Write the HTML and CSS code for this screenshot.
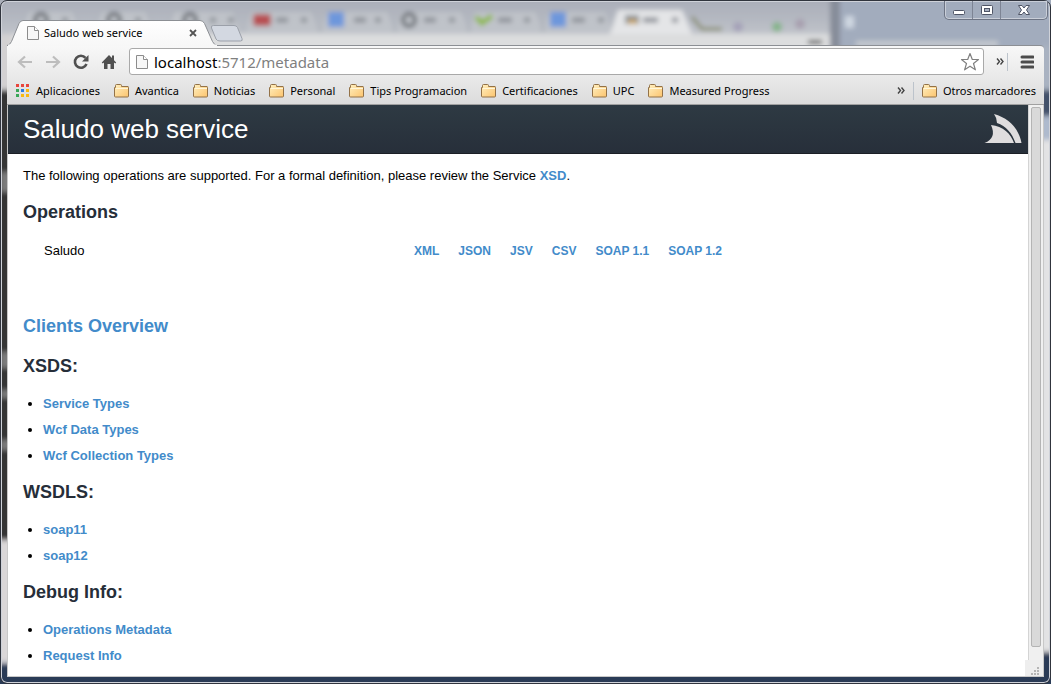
FILE: index.html
```html
<!DOCTYPE html>
<html lang="es">
<head>
  <meta charset="UTF-8">
  <meta name="viewport" content="width=device-width, initial-scale=1.0">
  <title>Saludo web service</title>
  <link rel="stylesheet" href="styles.css">
</head>
<body>
  <!-- shared icons -->
  <svg class="defs" width="0" height="0" aria-hidden="true">
    <defs>
      <linearGradient id="folderFill" x1="0" y1="0" x2="1" y2="1">
        <stop offset="0" stop-color="#fff0c0"/>
        <stop offset="1" stop-color="#fcc46e"/>
      </linearGradient>
      <symbol id="folder" viewBox="0 0 16 14">
        <path d="M.5 12V3.500h1V1.500Q1.500.5 2.500.5h4Q7.500.5 7.500 1.500v1h6.500Q14.500 2.500 14.500 3.500v8.500Q14.500 13 13.500 13h-12Q.5 13 .5 12z" fill="url(#folderFill)" stroke="#937248"/>
        <path d="M2 4.500h12" stroke="#fff6da"/>
      </symbol>
      <symbol id="file" viewBox="0 0 12 14">
        <path d="M.5.5h7l4 4v9H.5z" fill="#f7f7f7" stroke="#8c8c8c"/>
        <path d="M7.500.5v4h4" fill="#fff" stroke="#8c8c8c"/>
      </symbol>
    </defs>
  </svg>

  <!-- blurred windows seen through the glass frame -->
  <svg class="glass" width="1051" height="684" viewBox="0 0 1051 684" aria-hidden="true">
    <defs>
      <filter id="blur" x="-5%" y="-5%" width="110%" height="110%"><feGaussianBlur stdDeviation="2.500"/></filter>
      <linearGradient id="strip" x1="0" y1="0" x2="0" y2="1">
        <stop offset="0" stop-color="#a5a9b5"/>
        <stop offset=".45" stop-color="#b4b8c1"/>
        <stop offset="1" stop-color="#d0d2d6"/>
      </linearGradient>
    </defs>
    <g filter="url(#blur)">
      <rect x="-10" y="-10" width="850" height="64" fill="url(#strip)"/>
      <path d="M20 32L28 11h45l8 20M93 32l8-21h45l8 20M166 32l8-21h60l8 21M244 32l6-21h62l8 21M320 32l6-21h62l8 21M394 32l6-21h62l8 21M468 32l6-21h62l8 21M542 32l6-21h58l8 21" fill="#bfc3c9" stroke="#a3a8b2"/>
      <path d="M-10 34H850v20H-10z" fill="#dcddde"/>
      <path d="M610 34l8-24h64l10 24z" fill="#e4e5e7"/>
      <rect x="253" y="14" width="18" height="12" rx="3" fill="#b85052"/>
      <rect x="328" y="12" width="16" height="15" fill="#6d97dc"/>
      <rect x="550" y="12" width="16" height="15" fill="#6d97dc"/>
      <g fill="none" stroke="#6a6e75" stroke-width="4">
        <circle cx="41" cy="20" r="6"/><circle cx="114" cy="20" r="6"/><circle cx="190" cy="20" r="6"/><circle cx="409" cy="20" r="6"/>
      </g>
      <path d="M476 17l6 6 10-7" fill="none" stroke="#8bb83d" stroke-width="5"/>
      <path d="M625 15h14v9h-14z" fill="#87919a"/>
      <path d="M628 19h9v5h-9z" fill="#c9a562"/>
      <path d="M276 20h12M354 20h12M424 20h12M498 20h14M572 20h13M643 20h15M62 20h6M135 20h6M210 20h6M228 20h6M301 20h6M375 20h6M449 20h6M524 20h6M598 20h6M672 20h6" stroke="#8e9299" stroke-width="5"/>
      <circle cx="777" cy="27" r="5" fill="#84b489"/>
      <circle cx="800" cy="24" r="5" fill="#a79faf"/>
      <circle cx="738" cy="27" r="5" fill="#a4a0b8"/>
      <path d="M692 17l10 12h20" stroke="#848865" fill="none" stroke-width="3"/>
      <path d="M808 42h14" stroke="#555" stroke-width="4"/>
      <rect x="830" y="-10" width="10" height="64" fill="#868c99"/>
      <rect x="840" y="-10" width="221" height="64" fill="#a2acbd"/>
      <rect x="845" y="16" width="9" height="12" fill="#cfd7e1"/>
      <rect x="856" y="41" width="142" height="5" fill="#c8ccd0"/>
      <!-- left edge -->
      <rect x="-10" y="34" width="22" height="56" fill="#d3d1d2"/>
      <rect x="-10" y="90" width="22" height="450" fill="#343434"/>
      <path d="M0 172h12v20H0zM0 352h12v16H0zM0 390h12v8H0zM0 440h12v10H0z" fill="#7b7b7b"/>
      <rect x="-10" y="540" width="22" height="122" fill="#dad7d8"/>
      <!-- right edge -->
      <rect x="1040" y="46" width="22" height="44" fill="#a9b2c1"/>
      <rect x="1040" y="90" width="22" height="26" fill="#43516b"/>
      <rect x="1040" y="116" width="22" height="24" fill="#aebacd"/>
      <rect x="1040" y="140" width="22" height="512" fill="#e3e3e4"/>
      <rect x="-10" y="664" width="1071" height="30" fill="#2c3b56"/>
      <rect x="1040" y="652" width="22" height="40" fill="#2c3b56"/>
    </g>
  </svg>

  <div class="window">
    <header class="titlebar">
      <div class="tab">
        <svg class="tab-shape" width="234" height="26" viewBox="0 0 234 26" aria-hidden="true">
          <defs>
            <linearGradient id="tabFill" x1="0" y1="0" x2="0" y2="1">
              <stop offset="0" stop-color="#fff"/>
              <stop offset="1" stop-color="#f7f7f7"/>
            </linearGradient>
          </defs>
          <path d="M0 25.500q3-.5 4.500-4L12 3.500Q13.500.5 16 .5h177q3 0 4.500 3l8 18q2 4 5 4z" fill="url(#tabFill)" stroke="#8c8f94"/>
          <path d="M1 25.500h209" stroke="#f7f7f7" stroke-width="2"/>
        </svg>
        <svg class="tab-icon" width="12" height="14"><use href="#file"/></svg>
        <span class="tab-title">Saludo web service</span>
        <button class="tab-close" aria-label="Cerrar pestaña">
          <svg width="8" height="8" viewBox="0 0 8 8"><path d="M1 1l6 6M7 1L1 7" stroke="#555" stroke-width="1.800"/></svg>
        </button>
      </div>
      <button class="new-tab" aria-label="Nueva pestaña">
        <svg width="34" height="17" viewBox="0 0 34 17"><path d="M4.500.5H25q2.500 0 3.500 2l4.500 11q1 2.500-1.500 2.500H11q-3 0-4-2L2.500 3Q1.500.5 4.500.5z" fill="#d3d8e1" stroke="#9ba0a9"/></svg>
      </button>
      <div class="controls">
        <button aria-label="Minimizar"><svg width="14" height="14" viewBox="0 0 14 14"><rect x="1.500" y="7.500" width="11" height="4" rx="1" fill="#fff" stroke="#4f5566"/></svg></button>
        <button aria-label="Maximizar"><svg width="14" height="14" viewBox="0 0 14 14"><rect x="1.500" y="2.500" width="11" height="9" rx="1" fill="#fff" stroke="#4f5566"/><rect x="4.500" y="5.500" width="5" height="3" fill="#a9b1c1" stroke="#4f5566"/></svg></button>
        <button class="close" aria-label="Cerrar"><svg width="14" height="14" viewBox="0 0 14 14"><path d="M1.500 2.500h3.500l2 2.500 2-2.500h3.500L9.500 7l3 4.500H9L7 9l-2 2.500H1.500L4.500 7z" fill="#fff" stroke="#4f5566"/></svg></button>
      </div>
    </header>

    <div class="toolbar">
      <button aria-label="Atrás"><svg width="16" height="14" viewBox="0 0 16 14"><path d="M15 7H3M8 1.500L2 7l6 5.500" fill="none" stroke="#bdbdbd" stroke-width="2.200"/></svg></button>
      <button aria-label="Adelante"><svg width="16" height="14" viewBox="0 0 16 14"><path d="M1 7h12M8 1.500L14 7l-6 5.500" fill="none" stroke="#bdbdbd" stroke-width="2.200"/></svg></button>
      <button aria-label="Recargar"><svg width="16" height="16" viewBox="0 0 16 16"><path d="M12.500 3.800A6 6 0 1 0 13.500 10" fill="none" stroke="#505050" stroke-width="2.600"/><path d="M15.500 1v6.500H9z" fill="#505050"/></svg></button>
      <button aria-label="Inicio"><svg width="16" height="16" viewBox="0 0 16 16"><path d="M8 1L.8 8.500l1 1L3 8.500V15h3.500v-5h3v5H13V8.500l1.200 1 1-1L13 6.200V1.500h-2V4z" fill="#505050"/></svg></button>
      <div class="omnibox">
        <svg width="12" height="14"><use href="#file"/></svg>
        <span class="address"><b>localhost</b>:5712/metadata</span>
        <button aria-label="Añadir a marcadores"><svg width="20" height="20" viewBox="0 0 20 20"><path d="M10 1.500l2.300 6h6.200l-5 4 1.900 6.300L10 14.200l-5.400 3.600 1.900-6.300-5-4h6.200z" fill="#fff" stroke="#808080" stroke-width="1.200" stroke-linejoin="round"/></svg></button>
      </div>
      <div class="actions">
        <button aria-label="Más extensiones"><svg width="8" height="7" viewBox="0 0 8 7"><path d="M1 .5l2.500 3L1 6.500M4.500.5l2.500 3-2.500 3" fill="none" stroke="#444" stroke-width="1.400"/></svg></button>
        <span class="divider"></span>
      </div>
      <button aria-label="Menú"><svg width="14" height="14" viewBox="0 0 14 14"><path d="M2 2h11M2 7h11M2 12h11" stroke="#4c4c4c" stroke-width="3" stroke-linecap="round"/></svg></button>
    </div>

    <nav class="bookmarks">
      <a href="#"><svg width="16" height="14" viewBox="0 0 16 14"><path d="M1 0h3v3H1zM6 0h3v3H6zM11 0h3v3h-3z" fill="#e8453c"/><path d="M1 5h3v3H1zM1 10h3v3H1z" fill="#3aa757"/><path d="M6 5h3v3H6z" fill="#2a7de1"/><path d="M11 5h3v3h-3zM6 10h3v3H6zM11 10h3v3h-3z" fill="#f9b90f"/></svg>Aplicaciones</a>
      <a href="#"><svg width="16" height="14"><use href="#folder"/></svg>Avantica</a>
      <a href="#"><svg width="16" height="14"><use href="#folder"/></svg>Noticias</a>
      <a href="#"><svg width="16" height="14"><use href="#folder"/></svg>Personal</a>
      <a href="#"><svg width="16" height="14"><use href="#folder"/></svg>Tips Programacion</a>
      <a href="#"><svg width="16" height="14"><use href="#folder"/></svg>Certificaciones</a>
      <a href="#"><svg width="16" height="14"><use href="#folder"/></svg>UPC</a>
      <a href="#"><svg width="16" height="14"><use href="#folder"/></svg>Measured Progress</a>
      <div class="others">
        <button aria-label="Más marcadores"><svg width="8" height="7" viewBox="0 0 8 7"><path d="M1 .5l2.500 3L1 6.500M4.500.5l2.500 3-2.500 3" fill="none" stroke="#444" stroke-width="1.400"/></svg></button>
        <span class="divider"></span>
        <a href="#"><svg width="16" height="14"><use href="#folder"/></svg>Otros marcadores</a>
      </div>
    </nav>

    <div class="viewport">
      <main class="page">
        <div class="banner">
          <h1>Saludo web service</h1>
          <svg width="38" height="30" viewBox="0 0 38 30" aria-hidden="true">
            <path d="M10 0C25 4 35 15 37.500 29h-6C28 19 22 12 13 9Q13 4 10 0z" fill="#dfddde"/>
            <path d="M7 11c12 1 20 9 23 18H.5Q13 24 7 11z" fill="#dfddde"/>
          </svg>
        </div>
        <div class="content">
          <p>The following operations are supported. For a formal definition, please review the Service <a href="#">XSD</a>.</p>
          <h2>Operations</h2>
          <table>
            <tr>
              <th>Saludo</th>
              <td><a href="#">XML</a></td>
              <td><a href="#">JSON</a></td>
              <td><a href="#">JSV</a></td>
              <td><a href="#">CSV</a></td>
              <td><a href="#">SOAP 1.1</a></td>
              <td><a href="#">SOAP 1.2</a></td>
            </tr>
          </table>
          <h2><a href="#">Clients Overview</a></h2>
          <h2>XSDS:</h2>
          <ul>
            <li><a href="#">Service Types</a></li>
            <li><a href="#">Wcf Data Types</a></li>
            <li><a href="#">Wcf Collection Types</a></li>
          </ul>
          <h2>WSDLS:</h2>
          <ul>
            <li><a href="#">soap11</a></li>
            <li><a href="#">soap12</a></li>
          </ul>
          <h2>Debug Info:</h2>
          <ul>
            <li><a href="#">Operations Metadata</a></li>
            <li><a href="#">Request Info</a></li>
          </ul>
        </div>
      </main>
      <div class="scrollbar">
        <div class="thumb"></div>
        <svg class="grip" width="18" height="16" viewBox="0 0 18 16" aria-hidden="true"><path d="M12 7h2v2h-2zM9 10h2v2H9zM12 10h2v2h-2zM6 13h2v2H6zM9 13h2v2H9zM12 13h2v2h-2z" fill="#b5b5b5"/></svg>
      </div>
    </div>
  </div>
</body>
</html>
```

FILE: styles.css
```css
* {
  box-sizing: border-box;
}

body {
  margin: 0;
  height: 100vh;
  overflow: hidden;
  background: #a9b1bf;
  font-family: "Noto Sans", sans-serif;
  font-size: 11px;
  color: #000;
}

button {
  display: flex;
  padding: 0;
  border: none;
  background: none;
}

svg {
  display: block;
  flex: none;
}

.defs,
.glass {
  position: absolute;
  top: 0;
  left: 0;
}

.window {
  position: relative;
  display: flex;
  flex-direction: column;
  height: 100vh;
  padding: 0 6px 6px;
  border: 1px solid #30343d;
  border-radius: 7px;
  box-shadow: inset 0 0 0 1px #cfd2d9;
}

/* title bar */

.titlebar {
  display: flex;
  align-items: flex-end;
  height: 44px;
  margin-right: -4px;
}

.tab {
  position: relative;
  display: flex;
  align-items: center;
  width: 202px;
  height: 25px;
  padding: 0 12px 0 20px;
}

.tab-shape {
  position: absolute;
  left: 0;
  top: 0;
}

.tab-icon,
.tab-title,
.tab-close {
  position: relative;
}

.tab-title {
  flex: 1;
  margin-left: 5px;
  white-space: nowrap;
}

.new-tab {
  margin-bottom: 3px;
}

.controls {
  display: flex;
  align-self: flex-start;
  margin-left: auto;
  border: 1px solid #6d7484;
  border-top: none;
  border-radius: 0 0 5px 5px;
  box-shadow: inset 0 0 0 1px #c9ced8;
}

.controls button {
  align-items: center;
  justify-content: center;
  width: 28px;
  height: 18px;
  border-right: 1px solid #7d8494;
}

.controls .close {
  width: 46px;
  border-right: none;
}

/* toolbar */

.toolbar {
  display: flex;
  align-items: center;
  gap: 12px;
  height: 32px;
  padding: 0 10px;
  background: linear-gradient(#f8f8f8, #e9e9e9);
  border-top: 1px solid #8c8f94;
  border-radius: 0 4px 0 0;
}

.omnibox {
  display: flex;
  flex: 1;
  align-items: center;
  gap: 6px;
  height: 27px;
  padding: 0 3px 0 6px;
  background: #fff;
  border: 1px solid #a9a9a9;
  border-radius: 3px;
}

.address {
  flex: 1;
  font-size: 15px;
  color: #808080;
}

.address b {
  font-weight: normal;
  color: #000;
}

.actions {
  display: flex;
  align-items: center;
  gap: 3px;
}

.divider {
  width: 1px;
  height: 18px;
  background: #bcc3cb;
}

/* bookmarks */

.bookmarks {
  display: flex;
  align-items: center;
  gap: 14px;
  height: 28px;
  padding: 0 8px;
  background: linear-gradient(#e9e9e9, #dcdcdc);
  border-bottom: 1px solid #a0a0a0;
}

.bookmarks a {
  display: flex;
  align-items: center;
  gap: 5px;
  color: #000;
  text-decoration: none;
  white-space: nowrap;
}

.others {
  display: flex;
  align-items: center;
  gap: 8px;
  margin-left: auto;
}

/* page */

.viewport {
  display: flex;
  flex: 1;
  min-height: 0;
  background: #fff;
  border: 1px solid #c8c8c8;
  border-top: none;
}

.page {
  flex: 1;
  overflow: hidden;
  font-family: "Liberation Sans", Arial, sans-serif;
  font-size: 13px;
}

.banner {
  display: flex;
  align-items: center;
  justify-content: space-between;
  height: 49px;
  padding: 0 6px 0 15px;
  background: linear-gradient(#2e3a43, #272f3a);
  border-bottom: 1px solid #1b1f25;
}

h1 {
  margin: 0;
  font-size: 26px;
  font-weight: normal;
  color: #fff;
}

.content {
  padding: 14px 15px;
}

.content a {
  color: #428bca;
  font-weight: bold;
  text-decoration: none;
}

p {
  margin: 0;
  line-height: 16px;
}

h2 {
  margin: 0;
  padding: 16px 0 13px;
  font-size: 18px;
  line-height: 24px;
  color: #262e39;
}

h2 + h2 {
  padding-top: 3px;
}

ul + h2 {
  padding-top: 11px;
}

table {
  margin: 1px 0 34px 19px;
  border-spacing: 0;
  line-height: 22px;
}

th {
  width: 372px;
  padding: 2px;
  font-weight: normal;
  text-align: left;
}

td {
  padding: 0 19px 0 0;
  font-size: 12px;
}

ul {
  margin: 0;
  padding-left: 20px;
  line-height: 26px;
}

.scrollbar {
  display: flex;
  flex-direction: column;
  width: 15px;
  background: #f0f0f0;
  border-left: 1px solid #d4d4d4;
}

.thumb {
  flex: 1;
  margin: 2px 2px 13px;
  background: #d9d9d9;
  border: 1px solid #b4b4b4;
  border-radius: 2px;
}

.grip {
  margin-left: -4px;
  background: #eee;
}
```
